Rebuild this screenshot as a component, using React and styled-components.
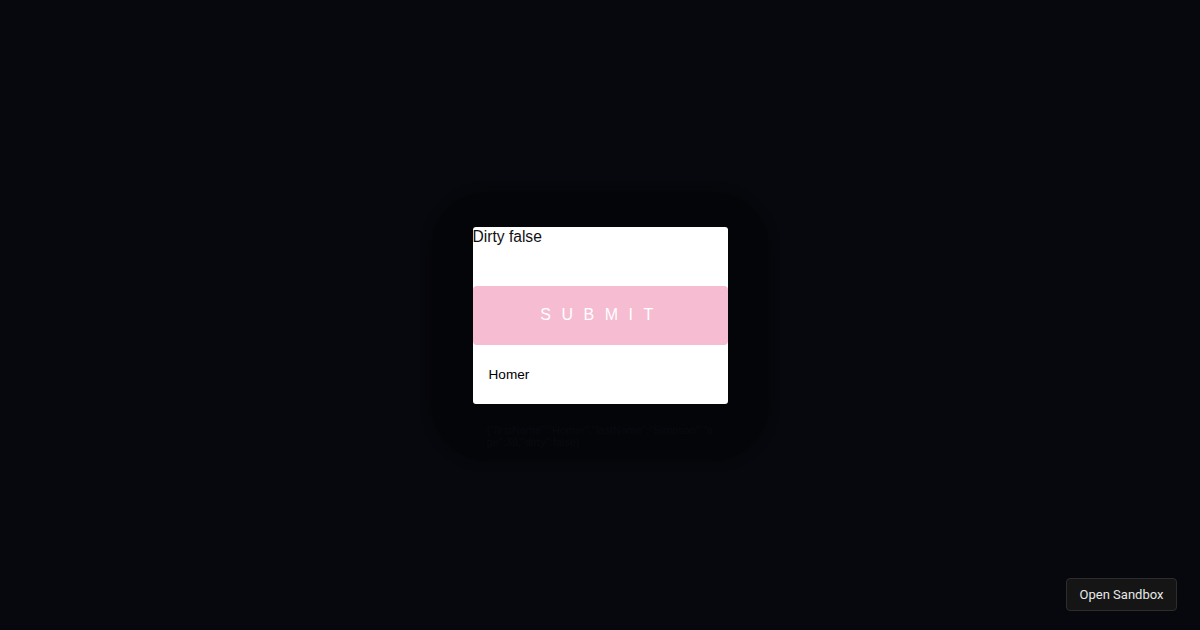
import React, { useState } from 'react';
import styled, { createGlobalStyle } from 'styled-components';

const GlobalStyle = createGlobalStyle`
  html, body {
    margin: 0;
    padding: 0;
    background: #07080d;
  }
  body {
    font-family: "Liberation Sans", Arial, sans-serif;
  }
`;

function App() {
  const [dirty] = useState(false);
  const [name] = useState('Homer');

  return (
    <>
      <GlobalStyle />
      <Page>
        <Frame>
          <Card>
            <Status>Dirty {String(dirty)}</Status>
            <SubmitButton type="button">Submit</SubmitButton>
            <NameRow>{name}</NameRow>
          </Card>
          <Debug>{'{"firstName":"Homer","lastName":"Simpson","age":39,"dirty":false}'}</Debug>
        </Frame>
        <SandboxButton type="button">Open Sandbox</SandboxButton>
      </Page>
    </>
  );
}

const Page = styled.div`
  position: relative;
  display: flex;
  align-items: center;
  justify-content: center;
  width: 1200px;
  height: 630px;
  background: #07080d;
  overflow: hidden;
`;

const Frame = styled.div`
  display: flex;
  flex-direction: column;
  align-items: center;
  box-sizing: border-box;
  width: 336px;
  height: 267px;
  margin-top: 22px;
  padding-top: 34px;
  border-radius: 56px;
  background: #040509;
  box-shadow: 0 0 8px 2px #05060a;
`;

const Card = styled.div`
  display: flex;
  flex-direction: column;
  width: 255px;
  background: #ffffff;
  border-radius: 3px;
  overflow: hidden;
`;

const Status = styled.div`
  height: 59px;
  color: #111;
  font-size: 15.6px;
  line-height: 19px;
`;

const SubmitButton = styled.button`
  height: 59px;
  padding: 0 0 0 14px;
  border: none;
  border-radius: 4px;
  background: #f5bcd2;
  color: #ffffff;
  font-family: "Liberation Sans", Arial, sans-serif;
  font-size: 16px;
  letter-spacing: 10.5px;
  text-transform: uppercase;
  text-indent: -10px;
  cursor: pointer;
`;

const NameRow = styled.div`
  display: flex;
  align-items: center;
  height: 59px;
  padding: 0 16px;
  color: #000;
  font-size: 13.6px;
`;

const Debug = styled.div`
  box-sizing: border-box;
  width: 255px;
  margin-top: 20px;
  padding: 0 14px;
  color: #090a10;
  font-size: 11px;
  line-height: 12px;
  word-break: break-all;
`;

const SandboxButton = styled.button`
  position: absolute;
  right: 23px;
  bottom: 19px;
  width: 111px;
  height: 33px;
  border: 1px solid #2d2d2d;
  border-radius: 4px;
  background: #151515;
  color: #e8e8e8;
  font-family: Roboto, "Liberation Sans", sans-serif;
  font-size: 13px;
  cursor: pointer;
`;

export default App;
